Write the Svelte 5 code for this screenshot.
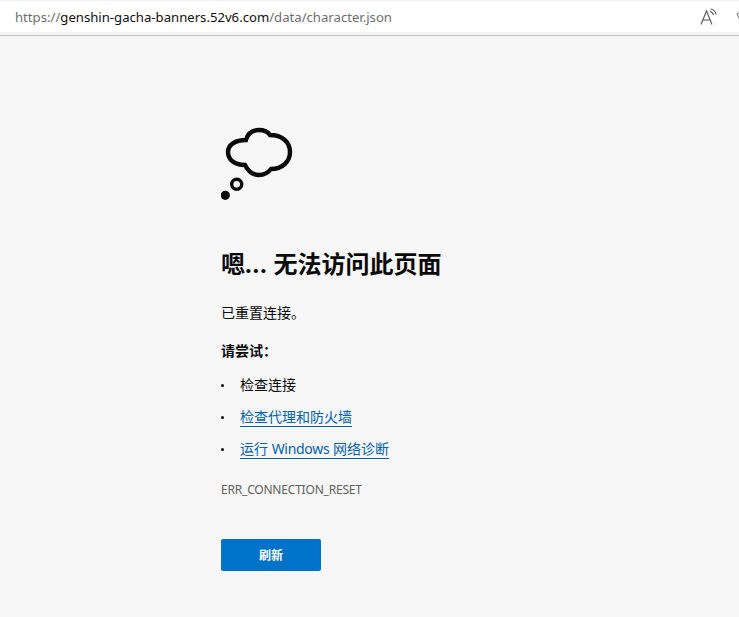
<script>
  const url = { scheme: 'https://', host: 'genshin-gacha-banners.52v6.com', path: '/data/character.json' };
</script>

<div class="page">
  <header class="toolbar">
    <div class="address">
      <span class="dim">{url.scheme}</span><span>{url.host}</span><span class="dim">{url.path}</span>
    </div>
    <svg class="read-icon" width="18" height="18" viewBox="0 0 18 18" fill="none" stroke="#555" stroke-width="1.1">
      <path d="M1 16.5 L6.5 3 L12 16.5 M3 12 H10" />
      <path d="M10.5 1 C13.5 1.5 15.5 3.5 16 6.5 M10 3.5 C11.8 3.8 13 5 13.4 7" />
    </svg>
    <svg class="fav-icon" width="10" height="18" viewBox="0 0 10 18" fill="none" stroke="#6b6b6b" stroke-width="1">
      <path d="M5 6 L9 3.5 M5 6 L8 12" />
    </svg>
  </header>

  <main class="content">
    <svg class="cloud" width="80" height="76" viewBox="11 5 80 76" fill="none" stroke="#0a0a0a">
      <path stroke-width="4.4" d="M36 20 C38 13 43 10 49 10 C54 10 58 12 60 15 C72 15 80 22 80 32 C80 42 72 49 61 49 C58 53 54 55 49 55 C43 55 38 51 35 45 C25 45 18 40 18 32 C18 25 25 20 36 20 Z" />
      <circle cx="26.7" cy="64.3" r="5" stroke-width="3.4" />
      <circle cx="15.3" cy="75.3" r="4.6" fill="#0a0a0a" stroke="none" />
    </svg>

    <h1>嗯<span class="dots">...</span> 无法访问此页面</h1>
    <p class="reason">已重置连接。</p>
    <p class="try">请尝试：</p>
    <ul>
      <li>检查连接</li>
      <li><a href="#proxy">检查代理和防火墙</a></li>
      <li><a href="#diag">运行 <span class="latin">Windows</span> 网络诊断</a></li>
    </ul>
    <div class="code">ERR_CONNECTION_RESET</div>
    <button>刷新</button>
  </main>
</div>

<style>
  :global(body) {
    margin: 0;
    background: #f6f6f6;
    font-family: "Noto Sans", "Noto Sans CJK SC", sans-serif;
    color: #0a0a0a;
  }

  .page {
    height: 617px;
    padding-top: 1px;
    box-sizing: border-box;
    overflow: hidden;
  }

  .toolbar {
    display: flex;
    align-items: center;
    height: 31px;
    background: #fff;
    box-shadow: 0 -1px 0 #f0f0f0;
    border-bottom: 4px solid #f4f4f4;
    position: relative;
  }

  .toolbar::after {
    content: '';
    position: absolute;
    left: 0;
    right: 0;
    bottom: -4px;
    height: 1px;
    background: #c4c4c4;
  }

  .address {
    flex: 1;
    padding-left: 15px;
    font-size: 13.15px;
    color: #111;
    white-space: nowrap;
  }

  .dim {
    color: #6e6e6e;
  }

  .read-icon {
    margin-right: 14px;
  }

  .fav-icon {
    margin-right: -3px;
  }

  .content {
    padding: 89px 0 0 221px;
    display: flex;
    flex-direction: column;
    align-items: flex-start;
  }

  .cloud {
    display: block;
  }

  h1 {
    margin: 47px 0 0;
    font-size: 24px;
    line-height: 32px;
    font-weight: 700;
  }

  .dots {
    letter-spacing: 0.7px;
  }

  p {
    margin: 0;
    font-size: 14px;
    line-height: 20px;
  }

  .reason {
    margin-top: 23px;
  }

  .try {
    margin-top: 18px;
    font-weight: 700;
  }

  ul {
    margin: 14px 0 0;
    padding: 0;
    list-style: none;
    font-size: 14px;
  }

  li {
    position: relative;
    padding-left: 19px;
    height: 20px;
    line-height: 20px;
    margin-bottom: 12px;
  }

  li::before {
    content: '';
    position: absolute;
    left: 0;
    top: 9px;
    width: 3px;
    height: 3px;
    border-radius: 50%;
    background: #0a0a0a;
  }

  a {
    display: inline-block;
    height: 19px;
    vertical-align: top;
    color: #0063b1;
    text-decoration: none;
    border-bottom: 1px solid #0063b1;
  }

  .latin {
    letter-spacing: -0.3px;
  }

  .code {
    margin-top: 9px;
    font-size: 12px;
    letter-spacing: -0.2px;
    line-height: 20px;
    color: #616161;
  }

  button {
    margin-top: 39px;
    width: 100px;
    height: 32px;
    border: none;
    border-radius: 2px;
    background: #0072c9;
    color: #fff;
    font: 700 12px "Noto Sans", "Noto Sans CJK SC", sans-serif;
  }
</style>
